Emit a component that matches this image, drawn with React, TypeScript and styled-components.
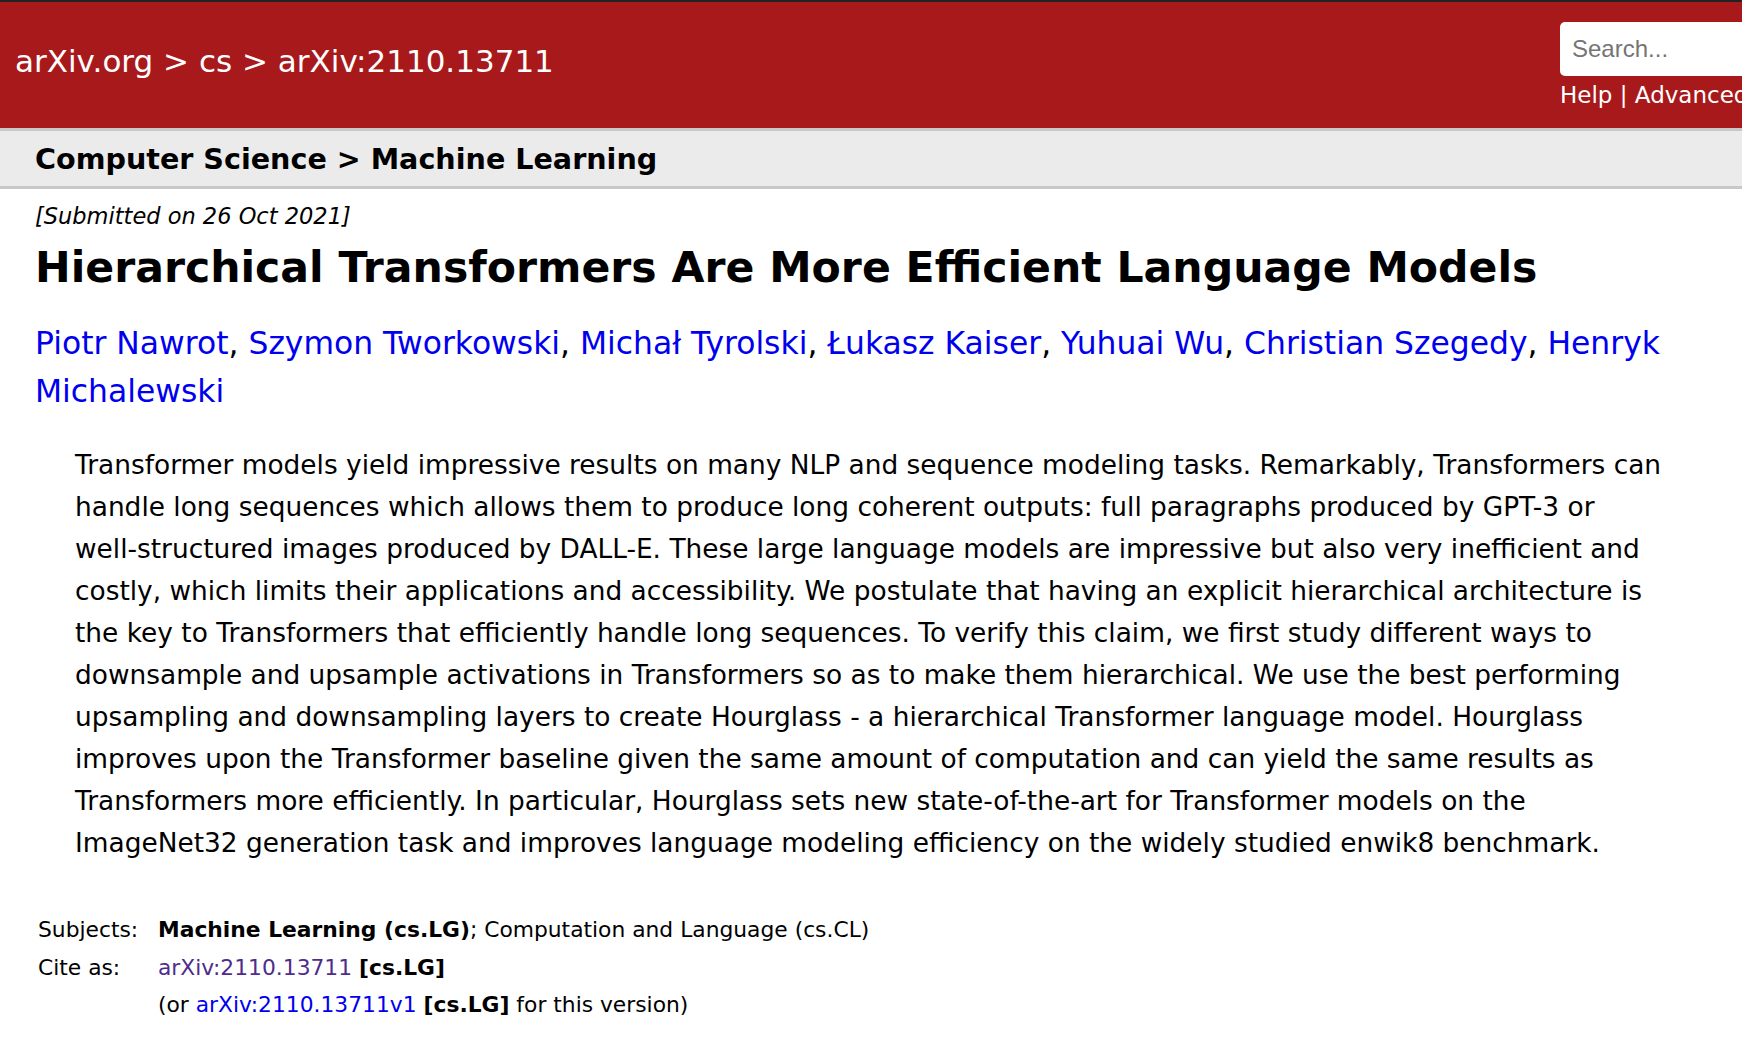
import React from 'react';
import styled, { createGlobalStyle } from 'styled-components';

const GlobalStyle = createGlobalStyle`
  body {
    margin: 0;
    background: #fff;
    color: #000;
    font-family: "DejaVu Sans", Verdana, sans-serif;
    overflow-x: hidden;
  }
  a { text-decoration: none; }
`;

const Header = styled.header`
  display: flex;
  justify-content: space-between;
  align-items: flex-start;
  height: 126px;
  padding-left: 15px;
  background: #a8191b;
  border-top: 2px solid #222;
`;

const Brand = styled.h1`
  margin: 39px 0 0;
  font-size: 31px;
  font-weight: normal;
  line-height: 40px;
  color: #fff;
  white-space: nowrap;
`;

// the search box runs past the right edge of the window, as in the page
const SearchBlock = styled.div`
  width: 182px;
  margin-top: 20px;
  overflow: hidden;
`;

const SearchInput = styled.input`
  display: block;
  box-sizing: border-box;
  width: 320px;
  height: 54px;
  padding: 0 12px;
  border: none;
  border-radius: 5px;
  background: #fff;
  font: 24px "Liberation Sans", Arial, sans-serif;
  color: #222;
  outline: none;

  &::placeholder {
    color: #757575;
  }
`;

const SearchLinks = styled.div`
  margin-top: 4px;
  font-size: 23px;
  line-height: 30px;
  color: #fff;
  white-space: nowrap;

  a {
    color: #fff;
  }
`;

const SubHeader = styled.div`
  padding: 2px 0 0 35px;
  height: 53px;
  background: #ebebeb;
  border-top: 3px solid #c8c8c8;
  border-bottom: 3px solid #c8c8c8;
  font-size: 28.6px;
  font-weight: bold;
  line-height: 53px;
  white-space: nowrap;
`;

const Main = styled.main`
  padding: 12px 35px 0;
`;

const Dateline = styled.div`
  font-size: 22.5px;
  font-style: italic;
  line-height: 30px;
`;

const Title = styled.h1`
  margin: 10px 0 0;
  font-size: 42.6px;
  font-weight: bold;
  line-height: 52px;
`;

const Authors = styled.div`
  margin-top: 26px;
  font-size: 31.4px;
  line-height: 48px;

  a {
    color: #0000ee;
  }
`;

const Abstract = styled.blockquote`
  width: 1600px;
  margin: 29px 0 0 40px;
  font-size: 26.4px;
  line-height: 42px;
`;

const NoWrap = styled.span`
  white-space: nowrap;
`;

const MetaTable = styled.div`
  display: grid;
  grid-template-columns: 120px auto;
  margin: 47px 0 0 3px;
  font-size: 21.8px;
  line-height: 37.5px;
`;

const MetaLabel = styled.div``;

const MetaValue = styled.div`
  b {
    font-weight: bold;
  }
`;

const Link = styled.a<{ $visited?: boolean }>`
  color: ${({ $visited }) => ($visited ? '#4f2d8a' : '#0000ee')};
`;

const authors = [
  'Piotr Nawrot',
  'Szymon Tworkowski',
  'Michał Tyrolski',
  'Łukasz Kaiser',
  'Yuhuai Wu',
  'Christian Szegedy',
  'Henryk Michalewski',
];

export default function App() {
  return (
    <>
      <GlobalStyle />
      <Header>
        <Brand>arXiv.org &gt; cs &gt; arXiv:2110.13711</Brand>
        <SearchBlock>
          <SearchInput placeholder="Search..." />
          <SearchLinks>
            <a href="#">Help</a> | <a href="#">Advanced Search</a>
          </SearchLinks>
        </SearchBlock>
      </Header>
      <SubHeader>Computer Science &gt; Machine Learning</SubHeader>
      <Main>
        <Dateline>[Submitted on 26 Oct 2021]</Dateline>
        <Title>Hierarchical Transformers Are More Efficient Language Models</Title>
        <Authors>
          {authors.map((name, i) => (
            <React.Fragment key={name}>
              <a href="#">{name}</a>
              {i < authors.length - 1 ? ', ' : ''}
            </React.Fragment>
          ))}
        </Authors>
        <Abstract>
          Transformer models yield impressive results on many NLP and sequence modeling tasks.
          Remarkably, Transformers can handle long sequences which allows them to produce long
          coherent outputs: full paragraphs produced by GPT-3 or <NoWrap>well-structured</NoWrap>{' '}
          images produced by DALL-E. These large language models are impressive but also very
          inefficient and costly, which limits their applications and accessibility. We postulate
          that having an explicit hierarchical architecture is the key to Transformers that
          efficiently handle long sequences. To verify this claim, we first study different ways to
          downsample and upsample activations in Transformers so as to make them hierarchical. We use
          the best performing upsampling and downsampling layers to create Hourglass - a
          hierarchical Transformer language model. Hourglass improves upon the Transformer baseline
          given the same amount of computation and can yield the same results as Transformers more
          efficiently. In particular, Hourglass sets new state-of-the-art for Transformer models on
          the ImageNet32 generation task and improves language modeling efficiency on the widely
          studied enwik8 benchmark.
        </Abstract>
        <MetaTable>
          <MetaLabel>Subjects:</MetaLabel>
          <MetaValue>
            <b>Machine Learning (cs.LG)</b>; Computation and Language (cs.CL)
          </MetaValue>
          <MetaLabel>Cite as:</MetaLabel>
          <MetaValue>
            <Link href="#" $visited>
              arXiv:2110.13711
            </Link>{' '}
            <b>[cs.LG]</b>
          </MetaValue>
          <MetaLabel />
          <MetaValue>
            (or <Link href="#">arXiv:2110.13711v1</Link> <b>[cs.LG]</b> for this version)
          </MetaValue>
        </MetaTable>
      </Main>
    </>
  );
}
